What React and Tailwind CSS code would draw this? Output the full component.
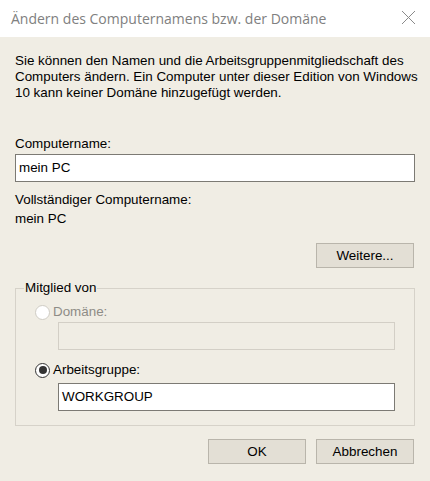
import React from "react";

const body = { fontFamily: '"Liberation Sans", Arial, sans-serif' };

function Radio({ checked, disabled }) {
  if (checked) {
    return (
      <span className="flex h-[15px] w-[15px] shrink-0 items-center justify-center rounded-full border-[1.5px] border-[#333333] bg-white">
        <span className="h-[8px] w-[8px] rounded-full bg-[#333333]" />
      </span>
    );
  }
  return (
    <span
      className={
        "h-[15px] w-[15px] shrink-0 rounded-full border bg-white " +
        (disabled ? "border-[#cfccc4]" : "border-[#333333]")
      }
    />
  );
}

function Button({ children, className = "" }) {
  return (
    <button
      className={
        "flex h-[25px] w-[98px] items-center justify-center border border-[#b9b5ab] bg-[#e3dfd5] text-[13.4px] text-black " +
        className
      }
    >
      {children}
    </button>
  );
}

export default function App() {
  return (
    <div
      className="flex h-[481px] w-[430px] flex-col overflow-hidden bg-[#f0ede4] text-[13.4px] leading-[16px] text-black"
      style={body}
    >
      {/* title bar */}
      <div className="flex h-[37px] shrink-0 items-center justify-between bg-white pl-[11px] pr-[14px]">
        <span
          className="whitespace-nowrap text-[14px] text-[#808080]"
          style={{ fontFamily: '"Open Sans", "Noto Sans", sans-serif' }}
        >
          Ändern des Computernamens bzw. der Domäne
        </span>
        <svg width="15" height="15" viewBox="0 0 15 15" className="mb-[2px]">
          <path d="M1 1 L14 14 M14 1 L1 14" stroke="#8a8a8a" strokeWidth="1" fill="none" />
        </svg>
      </div>

      <div className="flex flex-col px-[15px]">
        <p className="mt-[16px] whitespace-nowrap">
          Sie können den Namen und die Arbeitsgruppenmitgliedschaft des
          <br />
          Computers ändern. Ein Computer unter dieser Edition von Windows
          <br />
          10 kann keiner Domäne hinzugefügt werden.
        </p>

        <div className="mt-[35px]">Computername:</div>
        <div className="mt-[2px] flex h-[28px] w-[400px] items-center border border-[#7c7a74] bg-white pl-[3px]">
          mein PC
        </div>

        <div className="mt-[10px]">Vollständiger Computername:</div>
        <div className="mt-[3px]">mein PC</div>

        <div className="mt-[16px] flex justify-end pr-[1px]">
          <Button>Weitere...</Button>
        </div>

        <fieldset className="mt-[12px] w-[400px] border border-[#d6d2c9] pb-[14px]">
          <legend className="ml-[8px] px-[1px]">Mitglied von</legend>

          <div className="mt-[8px] flex h-[16px] items-center gap-[3px] pl-[19px] text-[#8e8c86]">
            <Radio disabled />
            <span>Domäne:</span>
          </div>
          <div className="ml-[42px] mt-[2px] h-[28px] w-[337px] border border-[#d3cfc6] bg-[#f0ede4]" />

          <div className="mt-[12px] flex h-[16px] items-center gap-[3px] pl-[19px]">
            <Radio checked />
            <span>Arbeitsgruppe:</span>
          </div>
          <div className="ml-[42px] mt-[5px] flex h-[28px] w-[337px] items-center border border-[#7c7a74] bg-white pl-[3px]">
            WORKGROUP
          </div>
        </fieldset>

        <div className="mt-[13px] flex justify-end gap-[10px] pr-[1px]">
          <Button>OK</Button>
          <Button>Abbrechen</Button>
        </div>
      </div>
    </div>
  );
}
